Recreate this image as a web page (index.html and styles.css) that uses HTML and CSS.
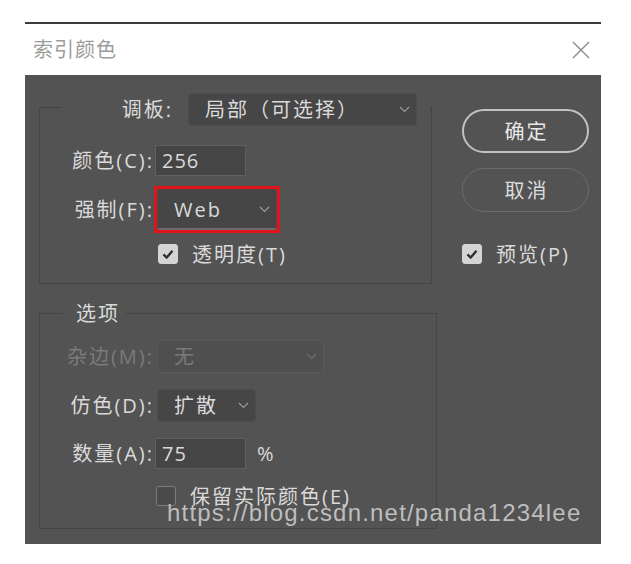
FILE: index.html
```html
<!DOCTYPE html>
<html lang="zh-CN">
<head>
<meta charset="utf-8">
<title>索引颜色</title>
<link rel="stylesheet" href="styles.css">
</head>
<body>
<div class="titlebar">
  <span class="title">索引颜色</span>
  <svg class="close" viewBox="0 0 18 18"><path d="M1 1 L17 17 M17 1 L1 17"/></svg>
</div>
<div class="panel">
  <div class="left">
    <fieldset class="group group-palette">
      <legend class="legend-palette">
        <span class="lbl">调板:</span>
        <div class="select select-palette"><span>局部（可选择）</span><svg class="chev" viewBox="0 0 11 7"><path d="M1 1 L5.5 5.5 L10 1"/></svg></div>
      </legend>
      <div class="grid grid-1">
        <span class="lbl">颜色(C):</span>
        <div class="input">256</div>
        <span class="lbl">强制(F):</span>
        <div class="mark"><div class="select select-web"><span>Web</span><svg class="chev" viewBox="0 0 11 7"><path d="M1 1 L5.5 5.5 L10 1"/></svg></div></div>
        <span></span>
        <div class="check-row check-trans"><span class="box checked"><svg viewBox="0 0 20 20"><path d="M5 10.5 L8.5 14 L15 6.5"/></svg></span><span>透明度(T)</span></div>
      </div>
    </fieldset>
    <fieldset class="group group-options">
      <legend class="legend-options">选项</legend>
      <div class="grid grid-2">
        <span class="lbl disabled">杂边(M):</span>
        <div class="select select-matte disabled"><span>无</span><svg class="chev" viewBox="0 0 11 7"><path d="M1 1 L5.5 5.5 L10 1"/></svg></div>
        <span class="lbl">仿色(D):</span>
        <div class="select select-dither"><span>扩散</span><svg class="chev" viewBox="0 0 11 7"><path d="M1 1 L5.5 5.5 L10 1"/></svg></div>
        <span class="lbl">数量(A):</span>
        <div class="amount"><div class="input">75</div><span class="pct">%</span></div>
        <span></span>
        <div class="check-row check-keep"><span class="box"></span><span>保留实际颜色(E)</span></div>
      </div>
    </fieldset>
  </div>
  <div class="right">
    <button class="btn btn-ok">确定</button>
    <button class="btn btn-cancel">取消</button>
    <div class="check-row preview"><span class="box checked"><svg viewBox="0 0 20 20"><path d="M5 10.5 L8.5 14 L15 6.5"/></svg></span><span>预览(P)</span></div>
  </div>
  <div class="watermark">https://blog.csdn.net/panda1234lee</div>
</div>
</body>
</html>
```
FILE: styles.css
```css
body {
  margin: 0;
  background: #ffffff;
  font-family: "Open Sans", "Noto Sans CJK SC", sans-serif;
}

.titlebar {
  margin: 22px 30px 0 25px;
  border-top: 2px solid #3c3c3c;
  height: 51px;
  padding: 0 11px 0 8px;
  display: flex;
  align-items: center;
  justify-content: space-between;
}

.title {
  font-size: 20px;
  letter-spacing: 1px;
  color: #9c9c9c;
  line-height: 1;
}

.close {
  width: 18px;
  height: 18px;
}

.close path {
  stroke: #8a8a8a;
  stroke-width: 1.4;
  fill: none;
}

.panel {
  position: relative;
  margin: 0 30px 0 25px;
  padding: 14px 12px 15px 14px;
  background: #535353;
  display: flex;
  color: #dadada;
  font-size: 20px;
  letter-spacing: 2px;
  line-height: 29px;
}

.left {
  width: 398px;
  display: flex;
  flex-direction: column;
}

fieldset {
  margin: 0;
  padding: 0;
  min-width: 0;
  border: 1px solid #454545;
  box-sizing: border-box;
}

.group-palette {
  width: 393px;
  padding: 19px 0 18px 0;
}

.group-options {
  width: 398px;
  margin-top: 15px;
  padding: 12px 0 21px 0;
}

.legend-palette {
  margin-left: 22px;
  padding: 4px 13px 0 0;
  width: 368px;
  box-sizing: border-box;
  display: flex;
  justify-content: flex-end;
  align-items: center;
  gap: 15px;
}

.legend-options {
  margin-left: 23px;
  padding: 0 6px 0 13px;
}

.grid {
  display: grid;
  grid-template-columns: 114px auto;
  column-gap: 1px;
  align-items: center;
  justify-content: start;
}

.grid-1 {
  grid-template-rows: 31px 47px 22px;
  row-gap: 10px;
}

.grid-2 {
  grid-template-rows: 33px 33px 31px 22px;
  row-gap: 16px;
}

.lbl {
  text-align: right;
  white-space: nowrap;
}

.disabled {
  color: #7a7a7a;
}

.input {
  width: 91px;
  height: 31px;
  box-sizing: border-box;
  background: #454545;
  border: 1px solid #5f5f5f;
  padding-left: 6px;
  display: flex;
  align-items: center;
  letter-spacing: 1px;
}

.select {
  height: 33px;
  box-sizing: border-box;
  background: #464646;
  border: 1px solid #4c4c4c;
  border-radius: 4px;
  display: flex;
  align-items: center;
  justify-content: space-between;
  padding: 0 6px 0 16px;
  white-space: nowrap;
}

.chev {
  width: 11px;
  height: 7px;
  flex: none;
}

.chev path {
  stroke: #9a9a9a;
  stroke-width: 1.2;
  fill: none;
}

.select-palette {
  width: 229px;
}

.mark {
  width: 126px;
  height: 47px;
  box-sizing: border-box;
  margin-left: -1px;
  border: 3px solid #e1141c;
}

.select-web {
  width: 120px;
  height: 41px;
  border-radius: 2px;
  border-color: #4a4a4a;
  border-bottom: 2px solid #6a6a6a;
}

.select-matte {
  width: 167px;
  margin-left: 2px;
  background: #4f4f4f;
  border-color: #5a5a5a;
}

.select-matte .chev path {
  stroke: #6e6e6e;
}

.select-dither {
  width: 99px;
  margin-left: 2px;
}

.amount {
  display: flex;
  align-items: center;
}

.pct {
  margin-left: 11px;
  letter-spacing: 0;
}

.check-row {
  display: flex;
  align-items: center;
  gap: 14px;
  height: 22px;
  white-space: nowrap;
}

.check-trans {
  margin-left: 3px;
}

.check-keep {
  margin-left: 1px;
}

.box {
  width: 20px;
  height: 20px;
  box-sizing: border-box;
  border-radius: 3px;
  background: #4a4a4a;
  border: 1px solid #7c7c7c;
  flex: none;
}

.box.checked {
  background: #d4d4d4;
  border-color: #d4d4d4;
}

.box svg {
  display: block;
  width: 18px;
  height: 18px;
}

.box svg path {
  stroke: #2f2f2f;
  stroke-width: 2.6;
  fill: none;
}

.right {
  margin-left: 25px;
  width: 127px;
  padding-top: 20px;
  display: flex;
  flex-direction: column;
}

.btn {
  width: 127px;
  height: 44px;
  border-radius: 22px;
  background: transparent;
  border: 2px solid #c2c2c2;
  color: #e8e8e8;
  font: inherit;
  letter-spacing: 2px;
  padding: 0 0 0 2px;
}

.btn-cancel {
  margin-top: 15px;
  border: 1.5px solid #6c6c6c;
  color: #dcdcdc;
}

.preview {
  margin-top: 31px;
}

.watermark {
  position: absolute;
  left: 142px;
  top: 424px;
  font-family: "Liberation Sans", Arial, sans-serif;
  font-size: 24px;
  letter-spacing: 1.2px;
  line-height: 28px;
  color: rgba(206, 206, 206, 0.88);
  pointer-events: none;
}
```
